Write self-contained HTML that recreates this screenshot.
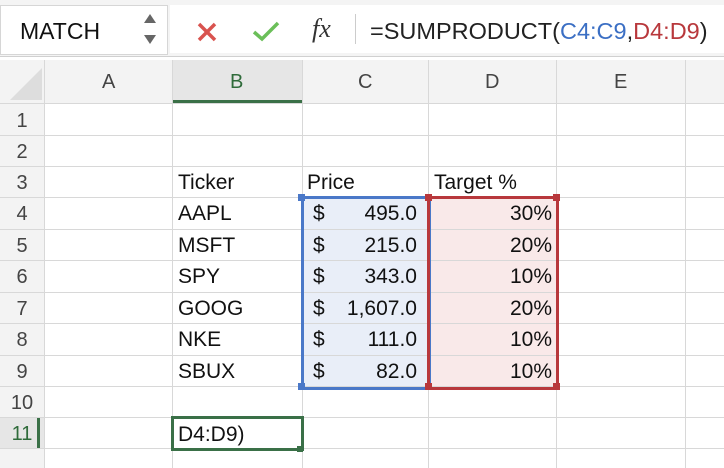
<!DOCTYPE html><html><head><style>
body{margin:0;width:724px;height:468px;overflow:hidden;background:#fff;font-family:"Liberation Sans",sans-serif;position:relative}
.a{position:absolute}
.hl{position:absolute;left:0;width:724px;height:1px;background:#d8d8d8}
.vl{position:absolute;top:60px;height:408px;width:1px;background:#d8d8d8}
.rn{position:absolute;left:0;width:44px;text-align:center;font-size:20px;color:#444}
.t{position:absolute;font-size:21px;color:#111}
.h{position:absolute;width:7px;height:7px}
</style></head><body>
<div class="a" style="left:0;top:0;width:724px;height:56px;background:#f4f4f4;border-bottom:1px solid #d0d0d0"></div>
<div class="a" style="left:0;top:5px;width:166px;height:48px;background:#fff;border:1px solid #d6d6d6"></div>
<div class="a" style="left:20px;top:18px;font-size:23px;color:#111">MATCH</div>
<svg class="a" style="left:141px;top:12px" width="18" height="34"><path d="M3 11L9 2L15 11Z" fill="#666"/><path d="M3 23L9 32L15 23Z" fill="#666"/></svg>
<div class="a" style="left:170px;top:5px;width:554px;height:48px;background:#fff"></div>
<svg class="a" style="left:196px;top:21px" width="22" height="22"><path d="M3 3L19 19M19 3L3 19" stroke="#d9534f" stroke-width="3.5"/></svg>
<svg class="a" style="left:252px;top:20px" width="28" height="22"><path d="M2 12L10 19L26 3" stroke="#6bbf59" stroke-width="3.5" fill="none"/></svg>
<div class="a" style="left:312px;top:14px;font-family:'Liberation Serif',serif;font-style:italic;font-size:26px;color:#333">fx</div>
<div class="a" style="left:355px;top:14px;width:1px;height:30px;background:#ccc"></div>
<div class="a" style="left:370px;top:18px;font-size:23.5px;color:#222">=SUMPRODUCT(<span style="color:#3b6fc4">C4:C9</span>,<span style="color:#b8383c">D4:D9</span>)</div>
<div class="a" style="left:0;top:60px;width:724px;height:43px;background:#f3f3f3"></div>
<div class="a" style="left:0;top:103px;width:44px;height:365px;background:#f3f3f3"></div>
<svg class="a" style="left:10px;top:68px" width="32" height="32"><path d="M32 0L32 32L0 32Z" fill="#ddd"/></svg>
<div class="a" style="left:172px;top:60px;width:130px;height:43px;background:#e6e6e6"></div>
<div class="a" style="left:172px;top:100px;width:130px;height:3px;background:#3a7047"></div>
<div class="a" style="left:0;top:417px;width:44px;height:31px;background:#e6e6e6"></div>
<div class="a" style="left:37px;top:417px;width:3px;height:31px;background:#3a7047"></div>
<div class="a" style="left:302px;top:197px;width:126px;height:190px;background:#e9eef8"></div>
<div class="a" style="left:428px;top:197px;width:128px;height:190px;background:#f9e9e9"></div>
<div class="hl" style="top:103px"></div><div class="hl" style="top:135px"></div><div class="hl" style="top:166px"></div><div class="hl" style="top:197px"></div><div class="hl" style="top:229px"></div><div class="hl" style="top:260px"></div><div class="hl" style="top:292px"></div><div class="hl" style="top:323px"></div><div class="hl" style="top:355px"></div><div class="hl" style="top:386px"></div><div class="hl" style="top:417px"></div><div class="hl" style="top:448px"></div>
<div class="vl" style="left:44px"></div><div class="vl" style="left:172px"></div><div class="vl" style="left:302px"></div><div class="vl" style="left:428px"></div><div class="vl" style="left:556px"></div><div class="vl" style="left:685px"></div>
<div class="t" style="left:102px;top:71px;color:#444;font-size:20px">A</div>
<div class="t" style="left:230px;top:71px;color:#2f6b3a;font-size:20px">B</div>
<div class="t" style="left:358px;top:71px;color:#444;font-size:20px">C</div>
<div class="t" style="left:485px;top:71px;color:#444;font-size:20px">D</div>
<div class="t" style="left:614px;top:71px;color:#444;font-size:20px">E</div>
<div class="rn" style="top:110px">1</div><div class="rn" style="top:141px">2</div><div class="rn" style="top:172px">3</div><div class="rn" style="top:203px">4</div><div class="rn" style="top:235px">5</div><div class="rn" style="top:266px">6</div><div class="rn" style="top:298px">7</div><div class="rn" style="top:329px">8</div><div class="rn" style="top:361px">9</div><div class="rn" style="top:392px">10</div><div class="rn" style="top:423px;color:#2f6b3a">11</div>
<div class="t" style="left:178px;top:171px">Ticker</div><div class="t" style="left:307px;top:171px">Price</div><div class="t" style="left:434px;top:171px">Target %</div>
<div class="t" style="left:178px;top:202px">AAPL</div><div class="t" style="left:178px;top:234px">MSFT</div><div class="t" style="left:178px;top:265px">SPY</div><div class="t" style="left:178px;top:297px">GOOG</div><div class="t" style="left:178px;top:328px">NKE</div><div class="t" style="left:178px;top:360px">SBUX</div>
<div class="t" style="left:313px;top:202px">$</div><div class="t" style="left:313px;top:234px">$</div><div class="t" style="left:313px;top:265px">$</div><div class="t" style="left:313px;top:297px">$</div><div class="t" style="left:313px;top:328px">$</div><div class="t" style="left:313px;top:360px">$</div>
<div class="t" style="right:307px;top:202px">495.0</div><div class="t" style="right:307px;top:234px">215.0</div><div class="t" style="right:307px;top:265px">343.0</div><div class="t" style="right:307px;top:297px">1,607.0</div><div class="t" style="right:307px;top:328px">111.0</div><div class="t" style="right:307px;top:360px">82.0</div>
<div class="t" style="right:172px;top:202px">30%</div><div class="t" style="right:172px;top:234px">20%</div><div class="t" style="right:172px;top:265px">10%</div><div class="t" style="right:172px;top:297px">20%</div><div class="t" style="right:172px;top:328px">10%</div><div class="t" style="right:172px;top:360px">10%</div>
<div class="a" style="left:301px;top:196px;width:124px;height:188px;border:3px solid #4a78c8"></div>
<div class="a" style="left:427px;top:196px;width:126px;height:188px;border:3px solid #b8383c"></div>
<div class="h" style="left:298px;top:194px;background:#4a78c8"></div><div class="h" style="left:298px;top:383px;background:#4a78c8"></div>
<div class="h" style="left:425px;top:194px;background:#b8383c"></div><div class="h" style="left:425px;top:383px;background:#b8383c"></div>
<div class="h" style="left:553px;top:194px;background:#b8383c"></div><div class="h" style="left:553px;top:383px;background:#b8383c"></div>
<div class="a" style="left:171px;top:416px;width:127px;height:29px;border:3px solid #3a7047"></div>
<div class="h" style="left:297px;top:446px;background:#3a7047;width:6px;height:6px"></div>
<div class="t" style="left:178px;top:423px">D4:D9)</div>
</body></html>
